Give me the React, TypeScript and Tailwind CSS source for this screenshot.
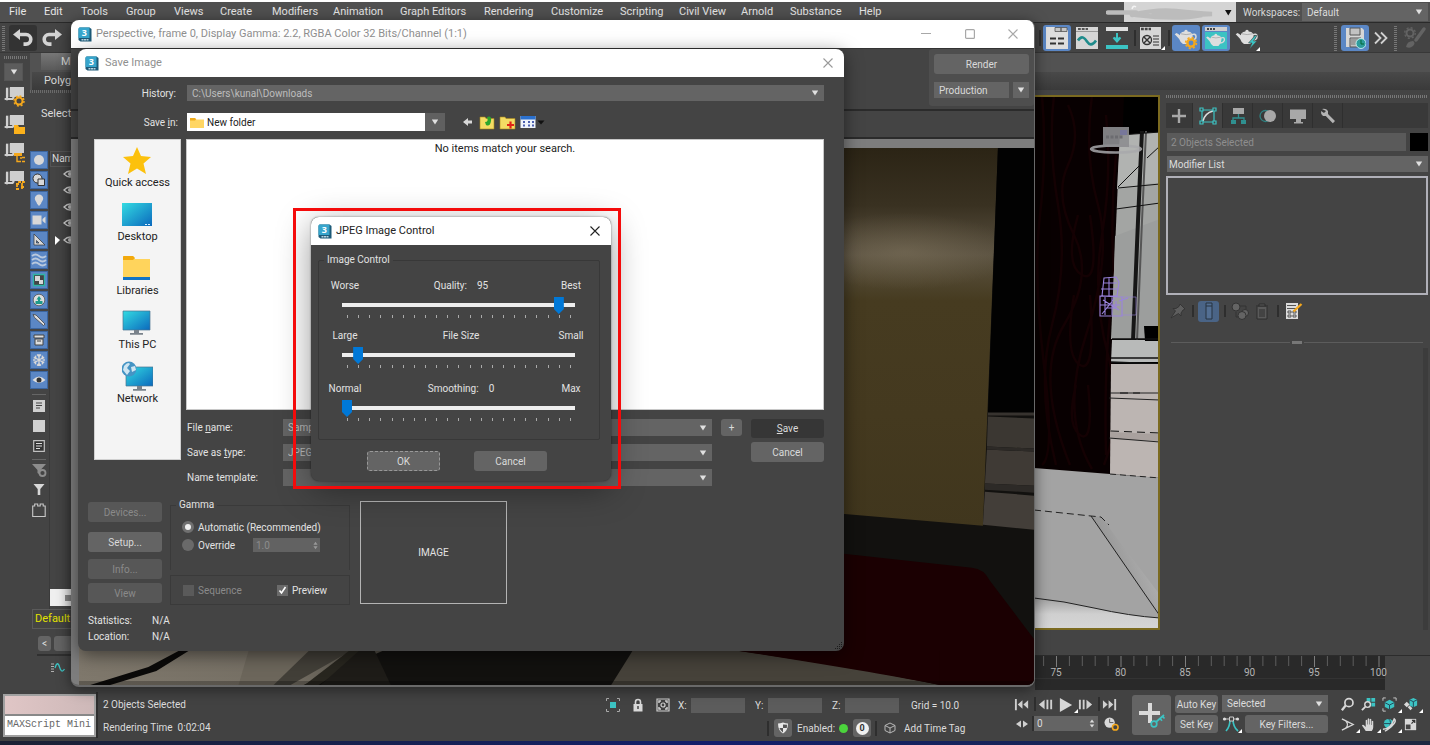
import React from "react";
import type { ReactNode } from "react";

const ink = "#cfcfcf";
const teal = "#3cc3c3";

/* ---------- shared controls ---------- */

function Caret({ className = "text-[#e0e0e0]" }: { className?: string }) {
  return (
    <svg viewBox="0 0 8 6" className={`h-[6px] w-[8px] ${className}`} fill="currentColor" aria-hidden="true">
      <path d="M0.8 0.5h6.4L4 5.6z" />
    </svg>
  );
}

function Combo({ label, value, className = "", text = "text-[#dcdcdc]", id }: { label?: string; value: string; className?: string; text?: string; id?: string }) {
  return (
    <div className={`grid items-center bg-[#646464] ${className}`}>
      <select id={id} aria-label={label} className={`h-full w-full appearance-none bg-transparent pr-5 pl-[5px] outline-none [grid-area:1/1] ${text}`}>
        <option>{value}</option>
      </select>
      <span className="pointer-events-none justify-self-end pr-[5px] [grid-area:1/1]">
        <Caret />
      </span>
    </div>
  );
}

function Btn({ children, className = "", label }: { children: ReactNode; className?: string; label?: string }) {
  return (
    <button type="button" aria-label={label} className={`flex items-center justify-center rounded-[3px] bg-[#646464] text-[#dadada] ${className}`}>
      {children}
    </button>
  );
}

function AppIcon() {
  return (
    <svg viewBox="0 0 14 15" className="h-[15px] w-[14px] shrink-0" aria-hidden="true">
      <path d="M1.5 0.5h10l2 1.5v12.5h-11l-2-1.5v-11z" fill="#1d5a78" />
      <path d="M1.5 0.5h10v10.5H0.5V1.5z" fill="#37a5cc" />
      <text x="6.4" y="8.6" textAnchor="middle" fontSize="9" fontWeight="700" fill="#fff" fontFamily="Open Sans, sans-serif">3</text>
      <path d="M3.5 12.7h7" stroke="#b9d3df" strokeWidth="1.4" strokeDasharray="2 .5" />
    </svg>
  );
}

function CloseX({ className }: { className: string }) {
  return (
    <button type="button" aria-label="Close" className={`flex h-[28px] w-[32px] items-center justify-center ${className}`}>
      <svg viewBox="0 0 10 10" className="h-[10px] w-[10px]" stroke="currentColor" strokeWidth="1.1" fill="none">
        <path d="M.5.5l9 9M9.5.5l-9 9" />
      </svg>
    </button>
  );
}

function Sep({ className = "h-[16px]" }: { className?: string }) {
  return <span className={`w-[2px] shrink-0 bg-[#2e2e2e] ${className}`} />;
}

function Grip({ className }: { className: string }) {
  return <span className={`shrink-0 bg-[repeating-linear-gradient(0deg,#777_0_1px,#444_1px_2px)] ${className}`} />;
}

/* ---------- menu and main toolbar ---------- */

const menus = [
  ["File", "w-[35px]"], ["Edit", "w-[37px]"], ["Tools", "w-[45px]"], ["Group", "w-[48px]"], ["Views", "w-[46px]"],
  ["Create", "w-[52px]"], ["Modifiers", "w-[61px]"], ["Animation", "w-[67px]"], ["Graph Editors", "w-[84px]"],
  ["Rendering", "w-[67px]"], ["Customize", "w-[69px]"], ["Scripting", "w-[59px]"], ["Civil View", "w-[62px]"],
  ["Arnold", "w-[49px]"], ["Substance", "w-[69px]"], ["Help", "w-[40px]"],
];

function MenuBar() {
  return (
    <header className="mt-[2px] flex h-[20px] shrink-0 items-center bg-[#505050] text-[11px] text-[#e6e6e6]">
      <nav className="flex pl-[9px]">
        {menus.map(([name, width]) => (
          <a key={name} href="#" className={`shrink-0 whitespace-nowrap ${width}`}>{name}</a>
        ))}
      </nav>
      <div className="ml-auto flex h-full items-center pr-[2px]">
        <svg viewBox="0 0 130 20" className="h-[20px] w-[130px]" role="img" aria-label="Account">
          <rect x="18" width="112" height="20" fill="#d4d4d4" />
          <path d="M2 10.5h28M26 13q24-6 44-4t36 3q-30 2-60 0 26-5 50 1-24 5-66 0" stroke="#bcbcbc" strokeWidth="4.5" fill="none" strokeLinecap="round" />
          <path d="M26 7q1-4 4-2" stroke="#f4f4f4" strokeWidth="1.5" fill="none" />
          <path d="M119 8h6.5l-3.2 5.5z" fill="#111" />
        </svg>
        <label htmlFor="workspace" className="w-[66px] pl-[7px] text-[10px] text-[#d6d6d6]">Workspaces:</label>
        <Combo id="workspace" value="Default" className="h-[18px] w-[126px] text-[10px]" />
      </div>
    </header>
  );
}

function Teapot({ gear, bolt, frame }: { gear?: boolean; bolt?: boolean; frame?: boolean }) {
  return (
    <svg viewBox="0 0 24 24" className="h-[24px] w-[24px]" aria-hidden="true">
      {frame && (
        <>
          <rect x="1" y="1" width="22" height="4" fill={ink} />
          <path d="M3 3h8" stroke="#444" strokeWidth="2" strokeDasharray="2 1" />
          <rect x="1" y="6" width="22" height="17" fill={teal} />
        </>
      )}
      <g transform={frame ? "translate(1.5 4.5) scale(.86)" : ""}>
        <path d="M17 9q5-2 5 1.500t-5 4" fill="none" stroke="#d9d9d9" strokeWidth="1.600" />
        <path d="M10.300 5.500q0-1.800 1.700-1.800t1.700 1.800q3 .4 4 1.700.9 1.200.9 3.300 0 4.500-3.600 7.500H9q-3-2-3.800-5Q3.500 11 .7 8.200L2.500 7q2 1 3.200 2.300.5-1.700 1.200-2.300 1-1.100 3.400-1.500z" fill="#dedede" />
        <path d="M7 7.800q5 1.600 10.500 0" fill="none" stroke="#999" strokeWidth=".7" />
      </g>
      {gear && <g><circle cx="17" cy="17" r="3.600" fill="#5b87c5" stroke="#f5a81c" strokeWidth="2.400" /><circle cx="17" cy="17" r="5.400" fill="none" stroke="#f5a81c" strokeWidth="1.600" strokeDasharray="2.120 2.120" /></g>}
      {bolt && <path d="M20 9.500l-6.500 7.500h3.500l-2.500 6 7.500-8h-3.500l3.500-5.500z" fill={teal} stroke="#444" strokeWidth=".6" />}
    </svg>
  );
}

function ToolButton({ on, label, children }: { on?: boolean; label: string; children: ReactNode }) {
  return (
    <button type="button" aria-label={label} className={`flex h-[26px] w-[28px] shrink-0 items-center justify-center rounded-[3px] ${on ? "bg-[#5b87c5]" : ""}`}>
      {children}
    </button>
  );
}

function MainToolbar() {
  return (
    <div className="flex h-[31px] shrink-0 items-center border-t border-[#2a2a2a] border-b border-b-[#383838] pt-[1px]">
      <Grip className="ml-[2px] h-[26px] w-[3px]" />
      <button type="button" aria-label="Undo" className="ml-[4px] flex h-[26px] w-[28px] items-center justify-center rounded-[3px] bg-[#333]">
        <svg viewBox="0 0 22 18" className="h-[18px] w-[22px]" fill="none"><path d="M6 5.500h8a4.800 4.800 0 010 9.600h-2.500" stroke="#d4d4d4" strokeWidth="3.600" /><path d="M8 0v11L1 5.500z" fill="#d4d4d4" /></svg>
      </button>
      <button type="button" aria-label="Redo" className="ml-[2px] flex h-[26px] w-[26px] items-center justify-center">
        <svg viewBox="0 0 22 18" className="h-[18px] w-[22px]" fill="none"><path d="M15 5.500H8a4.800 4.800 0 000 9.600h2.500" stroke="#d4d4d4" strokeWidth="3.600" /><path d="M14 0v11l7-5.500z" fill="#d4d4d4" /></svg>
      </button>
      <div className="ml-auto flex items-center">
        <Sep />
        <span className="w-[2px]" />
        <ToolButton on label="Layer explorer">
          <svg viewBox="0 0 22 22" className="h-[22px] w-[22px]"><path d="M0 0h9l2 3h11v19H0z" fill="#dedede" /><path d="M9 .5h6v4H9zM15 .5h6v4h-6z" fill="#c5c5c5" stroke="#555" strokeWidth=".8" /><path d="M4 11.500h6M12 11.500h6M4 16.500h6M12 16.500h6" stroke="#333" strokeWidth="2.200" /></svg>
        </ToolButton>
        <span className="w-[2px]" />
        <ToolButton label="Curve editor">
          <svg viewBox="0 0 22 22" className="h-[22px] w-[22px]"><path d="M0 0h22v22H0z" fill="#d6d6d6" /><path d="M2 2h10" stroke="#555" strokeWidth="2.200" strokeDasharray="2.800 1" /><path d="M0 4.500h22" stroke="#888" strokeWidth=".8" /><path d="M2 13.500c4-6 7-2 9 1s5 5 9-1" fill="none" stroke="#1f8b8b" strokeWidth="2.600" /></svg>
        </ToolButton>
        <span className="w-[2px]" />
        <ToolButton label="Ribbon">
          <svg viewBox="0 0 22 22" className="h-[22px] w-[22px]"><path d="M0 0h22v4H0z" fill="#dedede" /><path d="M0 18h22v4H0z" fill={teal} /><path d="M11 6v8M7.500 10.500L11 14.500l3.500-4" fill={teal} stroke={teal} strokeWidth="2" /></svg>
        </ToolButton>
        <span className="w-[3px]" />
        <Sep />
        <span className="w-[2px]" />
        <ToolButton label="Schematic view">
          <svg viewBox="0 0 26 24" className="h-[24px] w-[26px]"><path d="M1 1h21v22H1z" fill="#d6d6d6" /><path d="M2 3h10" stroke="#444" strokeWidth="2.400" strokeDasharray="2.800 1" /><circle cx="8" cy="14" r="4.500" fill="#d6d6d6" stroke="#333" strokeWidth="1.300" /><path d="M4.700 10.700l6.600 6.600M11.300 10.700l-6.600 6.600" stroke="#333" strokeWidth="1.400" /><path d="M14 10h6M14 13h6M14 16h6M14 19h6" stroke="#333" strokeWidth="1.200" /><path d="M26 20v4h-4z" fill="#fff" /></svg>
        </ToolButton>
        <span className="w-[2px]" />
        <Sep />
        <span className="w-[2px]" />
        <ToolButton on label="Render setup"><Teapot gear /></ToolButton>
        <span className="w-[2px]" />
        <ToolButton on label="Rendered frame window"><Teapot frame /></ToolButton>
        <span className="w-[3px]" />
        <ToolButton label="Render production"><Teapot bolt /></ToolButton>
        <svg viewBox="0 0 4 4" className="-ml-[5px] h-[4px] w-[4px] self-end" fill="#fff"><path d="M4 0v4H0z" /></svg>
        <span className="w-[74px]" />
        <Grip className="h-[26px] w-[3px]" />
        <span className="w-[4px]" />
        <ToolButton on label="Autosave">
          <svg viewBox="0 0 22 22" className="h-[22px] w-[22px]"><path d="M2 1h16l2 2v17H2z" fill="#d6d6d6" /><path d="M6 1h10v7H6zM6 11h11v9H6z" fill="#c2c2c2" stroke="#555" /><path d="M7 13h8M7 15h8M7 17h8" stroke="#777" /><circle cx="17" cy="16.500" r="5" fill="#2e9c9c" stroke="#d8ffff" strokeWidth=".8" /><path d="M17 13v4h3" stroke="#063" fill="none" /></svg>
        </ToolButton>
        <svg viewBox="0 0 14 14" className="ml-[5px] h-[14px] w-[14px]" fill="none" stroke="#d0d0d0" strokeWidth="1.800"><path d="M1 1.500L6.500 7 1 12.500M7 1.500L12.500 7 7 12.500" /></svg>
        <Grip className="ml-[6px] h-[26px] w-[3px]" />
        <svg viewBox="0 0 24 24" className="mr-[3px] ml-[6px] h-[24px] w-[24px]" fill="none"><circle cx="7" cy="7" r="3.500" stroke="#636363" strokeWidth="2" /><circle cx="7" cy="7" r="5.300" stroke="#636363" strokeWidth="1.300" strokeDasharray="2.080 2.080" /><path d="M21 3l-8 11" stroke="#636363" strokeWidth="3.500" strokeLinecap="round" /><path d="M3 21q1-6 7-6 3 2 0 5t-7 1z" fill="#636363" /></svg>
      </div>
    </div>
  );
}

/* ---------- left side ---------- */

const badges: ReactNode[] = [
  <g key="a"><circle cx="15" cy="15" r="3.500" fill="#444" stroke="#f5a81c" strokeWidth="2" /><circle cx="15" cy="15" r="5" fill="none" stroke="#f5a81c" strokeWidth="1.500" strokeDasharray="1.960 1.960" /></g>,
  <path key="b" d="M10 11h4l1 2h6v7H10z" fill="#fbb11b" />,
  <g key="c"><path d="M10 11h8v3h-8z" fill="#f5a81c" /><path d="M13 14v5.500h4M16 16h2M18 15.500h3M18 19.500h3" stroke="#f5a81c" strokeWidth="1.400" fill="none" /></g>,
  <path key="d" d="M12 14h3v-2h5v2M13 14v5M18 13v6M12 19h3M17 17h3" fill="none" stroke="#f5a81c" strokeWidth="1.800" strokeDasharray="3 1" />,
];

function LeftToolbar() {
  return (
    <aside className="flex w-[30px] shrink-0 flex-col pl-[4px]">
      <span className="mt-[3px] h-[3px] w-[24px] bg-[repeating-linear-gradient(90deg,#777_0_1px,#444_1px_2px)]" />
      <button type="button" aria-label="Toolbar options" className="mt-[4px] flex h-[18px] w-[19px] items-center justify-center border border-[#555] bg-[#5c5c5c]">
        <Caret className="text-[#e0e0e0]" />
      </button>
      <div className="mt-[5px] flex flex-col gap-[6px]">
        {badges.map((badge, i) => (
          <svg key={i} viewBox="0 0 22 22" className="h-[22px] w-[22px]">
            <path d="M6 1h14v10H6z" fill="#cfcfcf" />
            <path d="M3 2.500v11M1.500 13h6q2 0 2-2" stroke="#d0d0d0" strokeWidth="2.200" strokeLinecap="round" fill="none" />
            <path d="M5 1.500v9.500" stroke="#8a8a8a" strokeWidth="1" />
            {badge}
          </svg>
        ))}
      </div>
    </aside>
  );
}

const filterIcons: ReactNode[] = [
  <circle key="0" cx="8" cy="8" r="5" fill="#d8d8d8" />,
  <g key="1" fill="#d8d8d8" stroke="#333" strokeWidth="1"><circle cx="6.500" cy="6.500" r="4.500" /><path d="M7 7h6.500v6.500H7z" /></g>,
  <path key="2" d="M8 2.500a4.200 4.200 0 014.200 4.200c0 2-2 3-2.200 5L8 14l-2-2.300c-.2-2-2.200-3-2.200-5A4.200 4.200 0 018 2.500z" fill="#d8d8d8" />,
  <path key="3" d="M1.500 3.500h9v9h-9zM11.500 7l3-2.500v7l-3-2.500z" fill="#d8d8d8" />,
  <path key="4" d="M3 2v11h11zM5.500 8.500v2.500H8z" fill="#d8d8d8" fillRule="evenodd" stroke="#333" strokeWidth=".7" />,
  <path key="5" d="M1 4q3.500-3 7 0t7 0M1 8q3.500-3 7 0t7 0M1 12q3.500-3 7 0t7 0" fill="none" stroke="#b9c9dd" strokeWidth="1.700" />,
  <g key="6"><path d="M2.500 2.500h11v11h-11z" fill="#444" stroke="#2fb5a5" strokeWidth="1.300" /><path d="M4 4h5v5H4zM8 8h4v4H8z" fill="#d8d8d8" /></g>,
  <g key="7"><circle cx="8" cy="8" r="5.800" fill="#ddd" stroke="#555" strokeWidth=".8" /><path d="M8 4l2.500 3.500H9v1.500h2.500v3h-7V9H7V7.500H5.500z" fill="#1e9a8a" /></g>,
  <path key="8" d="M2 2.500l3 .5 9 9-1.500 1.500-9-8z" fill="#ddd" stroke="#444" strokeWidth=".8" />,
  <path key="9" d="M3 3h10v3H3zM4 7h8v6H4zM6 9h4" fill="#ddd" stroke="#444" strokeWidth="1" />,
  <g key="10" stroke="#d8d8d8" strokeWidth="1.300" fill="none"><path d="M8 2v12M2.800 5l10.400 6M13.200 5L2.800 11M6 2.500L8 4.500l2-2M6 13.500l2-2 2 2M2.300 7.500l2.700-1-.5-2.800M13.700 8.500l-2.700 1 .5 2.800M2.300 8.500l2.700 1-.5 2.800M13.700 7.500l-2.700-1 .5-2.800" /></g>,
  <g key="11"><path d="M1.500 8q6.500-7 13 0-6.500 6-13 0z" fill="#ddd" /><circle cx="8" cy="8" r="2.500" fill="#333" /></g>,
];

const plainIcons: ReactNode[] = [
  <g key="0"><path d="M2 2h12v12H2z" fill="#d0d0d0" /><path d="M5 5h6M5 7.500h6M5 10h4" stroke="#444" strokeWidth="1.100" /></g>,
  <path key="1" d="M2 2h12v12H2z" fill="#d0d0d0" />,
  <g key="2"><path d="M2.700 2.700h10.600v10.600H2.700z" fill="#333" stroke="#c0c0c0" strokeWidth="1.200" /><path d="M5 5.500h6M5 8h6M5 10.500h4" stroke="#ddd" strokeWidth="1.100" /></g>,
];

function SceneExplorer() {
  return (
    <div className="flex w-[130px] shrink-0 flex-col">
      <div className="h-[3px] bg-[repeating-linear-gradient(90deg,#6a6a6a_0_1px,#444_1px_2px)]" />
      <div className="mt-[14px] pl-[11px] text-[11px] leading-[14px] text-[#dcdcdc]">Select</div>
      <div className="mt-[30px] flex flex-1">
        <div className="flex w-[18px] flex-col items-center">
          <div className="flex flex-col gap-[2px]">
            {filterIcons.map((icon, i) => (
              <button key={i} type="button" aria-label={`Display filter ${i + 1}`} className="h-[18px] w-[18px] border border-[#3c66a0] bg-[#5b87c5]">
                <svg viewBox="0 0 16 16" className="h-[16px] w-[16px]">{icon}</svg>
              </button>
            ))}
          </div>
          <span className="mt-[5px] h-px w-[14px] bg-[#666]" />
          <div className="mt-[3px] flex flex-col gap-[4px]">
            {plainIcons.map((icon, i) => (
              <svg key={i} viewBox="0 0 16 16" className="h-[16px] w-[16px]">{icon}</svg>
            ))}
          </div>
          <span className="mt-[5px] h-px w-[14px] bg-[#666]" />
          <svg viewBox="0 0 16 60" className="mt-[2px] h-[60px] w-[16px]">
            <path d="M1 2h14L9.500 8v5L6.500 11V8z" fill="#8d8d8d" />
            <circle cx="11.500" cy="11" r="3" fill="#444" stroke="#8d8d8d" strokeWidth="1.800" />
            <path d="M2.500 22h11L9.300 27v6H6.700v-6z" fill="#d8d8d8" />
            <path d="M1.700 44h2v-2h3v2h2.500v-2h3v2h2v10.500H1.700z" fill="none" stroke="#c8c8c8" strokeWidth="1.100" />
          </svg>
        </div>
        <div className="ml-[1px] flex flex-1 flex-col border-l border-[#3a3a3a] text-[10px] text-[#dcdcdc]">
          <div className="h-[16px] border border-[#555] pl-[1px] leading-[13px]">Nam</div>
          <svg viewBox="0 0 30 84" className="h-[84px] w-[30px]">
            {[7, 23, 40, 56, 73].map((y) => (
              <g key={y}><path d={`M14 ${y}q6-6 12 0-6 6-12 0z`} fill="none" stroke="#d0d0d0" strokeWidth="1.300" /><circle cx="20" cy={y} r="2" fill="#d0d0d0" /></g>
            ))}
            <path d="M5 69l5 4-5 5z" fill="#fff" />
          </svg>
          <div className="mt-auto mb-[3px] flex h-[17px] items-center bg-[#efefef] pl-[15px]"><span className="h-[6px] w-[20px] bg-[#8c8c8c]" /></div>
        </div>
      </div>
      <div className="mb-[1px] ml-[2px] h-[20px] border border-[#5a5a5a] pl-[2px] text-[11px] leading-[17px] text-[#e2e200]">Default</div>
    </div>
  );
}

/* ---------- viewport and command panel ---------- */

function Viewport() {
  return (
    <div className="flex min-w-0 flex-1 justify-end overflow-hidden bg-black">
      <svg viewBox="0 0 126 535" className="h-[535px] w-[126px] shrink-0" role="img" aria-label="Perspective viewport">
        <rect width="126" height="535" fill="#000" />
        <path d="M0 0h90L77 380H0z" fill="#080001" />
        <g stroke="#160103" strokeWidth="2.500" fill="none" opacity=".85">
          <path d="M8 0q5 60-2 120t4 150-2 100M20 0q-6 50 4 110t-6 120 4 140M34 10q14 30 0 60t6 70-10 90 6 140M58 0q-8 60 6 110t-12 130 6 134M44 120q-14 50 4 60t8-60M40 200q-10 60 6 70t10-70M42 290q-10 40 4 50t8-50M72 20q6 60-4 120t6 120-4 110M82 60q-6 60-2 120M76 220q-6 60-4 140" />
        </g>
        <path d="M86 40l40-3-2 103-6 104H77z" fill="#a3a5a3" />
        <path d="M81 141L126 124v120H78z" fill="#9c9e9d" />
        <path d="M86 40h20l-3 52-20 2zM109 38h17v50l-18 1z" fill="#b1b3b1" />
        <path d="M108 36l-4 90-5 120" stroke="#161616" strokeWidth="4" fill="none" />
        <path d="M112 36l-4 90-5 120" stroke="#555" strokeWidth="2" fill="none" />
        <path d="M84 93l42-4M82 114l44-6M84 92l22-22M113 63l13-12M86 40l40-3" stroke="#111" fill="none" />
        <path d="M78 245h48v22H77z" fill="#b8bab9" />
        <path d="M110 231h16v15h-15z" fill="#000" />
        <path d="M78 244h48M77 263h49M77 267l49 2" stroke="#111" strokeWidth="1.500" />
        <path d="M77 269h49v114l-50-4z" fill="#bcb5b2" />
        <path d="M76 337l50 2v7l-50-2z" fill="#a9a19e" />
        <path d="M76 298h50M75 303l51 2M75 343l51 4" stroke="#222" />
        <path d="M77 336l49 2M86 298h20" stroke="#111" strokeDasharray="8 5" />
        <path d="M0 373l76 6 50 4v152H0z" fill="#a3a3a3" />
        <path d="M76 379l50 4" stroke="#222" strokeDasharray="6 4" fill="none" />
        <defs>
          <linearGradient id="vp-floor" x1="0" y1="0" x2="0" y2="1"><stop offset="0" stopColor="#a0a0a0" /><stop offset=".5" stopColor="#cfcfcf" /><stop offset="1" stopColor="#d6d6d6" /></linearGradient>
          <linearGradient id="vp-edge" x1="0" y1="0" x2="1" y2="-.6"><stop offset="0" stopColor="#969696" /><stop offset="1" stopColor="#d0d0d0" /></linearGradient>
        </defs>
        <path d="M57 421l10 1q6 5 9 12l50 66v21z" fill="url(#vp-edge)" />
        <path d="M0 503q30 3 60 10 36 8 66 10v12H0z" fill="url(#vp-floor)" />
        <path d="M0 503q30 3 60 10 36 8 66 10M57 421l69 100" stroke="#222" fill="none" />
        <path d="M0 415l57 6 10 1 8 8" stroke="#222" strokeDasharray="7 4" fill="none" />
        <g>
          <ellipse cx="82" cy="54" rx="25" ry="3.500" fill="none" stroke="#a8a8ac" strokeWidth="2.500" opacity=".85" />
          <path d="M69 32h26v20H69z" fill="#8d8d90" opacity=".9" />
          <path d="M72 42h18" stroke="#6c6c70" strokeWidth="3" strokeDasharray="3 1.500" />
          <path d="M86 35h7v5h-7z" fill="#77779a" />
        </g>
        <g fill="none" stroke="#9a83dd" strokeWidth="1.100">
          <path d="M70 183l12-1 3 5-2 14H68zM70 188h13M75 183v18M67 194h17M66 201l22 1v19H66zM66 210h20M71 202v18M78 202v18M69 205l16 10M85 206l9-3M72 213h10v-7M68 219l12-15" />
          <path d="M88 202h14v18H88" strokeWidth=".6" />
        </g>
        <path d="M0 1h125v533H0" stroke="#7b6a20" strokeWidth="2" fill="none" />
      </svg>
    </div>
  );
}

const panelTabs: { name: string; on?: boolean; icon: ReactNode }[] = [
  { name: "Create", icon: <path d="M10 3v14M3 10h14" stroke="#a8a8a8" strokeWidth="2.400" /> },
  { name: "Modify", on: true, icon: <g fill="none"><path d="M4 4h12v12H4z" stroke={teal} strokeWidth="1.200" /><path d="M5 15q2-8 10-10" stroke="#ddd" strokeWidth="1.600" /><path d="M2 2h3v3H2zM15 2h3v3h-3zM2 15h3v3H2zM15 15h3v3h-3z" fill="#444" stroke={teal} strokeWidth="1.200" /></g> },
  { name: "Hierarchy", icon: <g><path d="M5 2h11v6H5z" fill="#a8a8a8" /><path d="M10.500 8v4M5 15v-3h11v3" stroke="#2f9090" strokeWidth="1.300" fill="none" /><path d="M3 14h5v4H3zM13 14h5v4h-5z" fill="#2f9090" /></g> },
  { name: "Motion", icon: <g><circle cx="7.500" cy="10" r="5.500" fill="none" stroke="#2f8080" strokeWidth="1.300" /><circle cx="12" cy="10" r="6" fill="#a8a8a8" /></g> },
  { name: "Display", icon: <path d="M2 3.500h16v9.500h-5v3h2v1.500H6V16h2v-3H2z" fill="#a8a8a8" /> },
  { name: "Utilities", icon: <path d="M4 3q4-1 6 2v3l7 7-2.200 2.200-7-7.200H5Q2.500 8 3 5l3 2 2-2z" fill="#b4b4b4" /> },
];

function CommandPanel() {
  return (
    <aside className="flex w-[270px] shrink-0 flex-col pt-[5px] pr-[2px] pl-[6px] text-[10px]">
      <div className="h-[3px] bg-[repeating-linear-gradient(90deg,#777_0_1px,#444_1px_2px)]" />
      <div className="mt-[5px] flex h-[25px] bg-[#393939]">
        {panelTabs.map((tab) => (
          <button key={tab.name} type="button" aria-label={tab.name} className="flex w-[30px] items-center justify-center border-r border-[#2f2f2f] first:w-[27px] aria-[label=Modify]:bg-[#444]">
            <svg viewBox="0 0 20 20" className="h-[20px] w-[20px]">{tab.icon}</svg>
          </button>
        ))}
      </div>
      <div className="mt-[5px] flex h-[18px] gap-[4px] pl-[1px]">
        <input aria-label="Object name" readOnly value="2 Objects Selected" className="min-w-0 flex-1 bg-[#5a5a5a] pl-[4px] text-[#8e8e8e] outline-none" />
        <span className="w-[18px] bg-black" />
      </div>
      <Combo label="Modifier List" value="Modifier List" className="mt-[5px] ml-[1px] h-[16px] [&>select]:pl-[2px]" />
      <div className="mt-[4px] h-[119px] border-2 border-[#b0b0b8]" />
      <div className="mt-[5px] flex h-[22px] items-center pl-[4px]">
        <svg viewBox="0 0 16 16" className="h-[16px] w-[16px]" fill="#5e5e5e" stroke="#303030" strokeWidth=".8"><path d="M10 1l5 5-2 1-2 3v3L8.500 10.500 1 15l4.500-7L3 5.500h3l3-2z" /></svg>
        <Sep className="ml-[6px] h-[12px]" />
        <button type="button" aria-label="Show end result" className="ml-[4px] flex h-[21px] w-[21px] items-center justify-center rounded-[3px] bg-[#4a6486]">
          <svg viewBox="0 0 10 18" className="h-[18px] w-[10px]" fill="#536f93" stroke="#26323f"><path d="M2 1h6v16H2zM2 4h6" /></svg>
        </button>
        <Sep className="ml-[5px] h-[12px]" />
        <svg viewBox="0 0 20 20" className="ml-[4px] h-[20px] w-[20px]" fill="#646464" stroke="#333"><path d="M10 5h6v5M6 11v5h4" fill="none" /><circle cx="6" cy="6" r="4" /><circle cx="15" cy="12" r="3.500" /><circle cx="12" cy="14.500" r="4" /></svg>
        <svg viewBox="0 0 16 18" className="ml-[4px] h-[18px] w-[16px]" fill="#5a5a5a" stroke="#2c2c2c"><path d="M2 4h12M5 4V2h6v2M3 5v12h10V5M6 7v8M8 7v8M10 7v8" /></svg>
        <Sep className="ml-[7px] h-[12px]" />
        <svg viewBox="0 0 18 18" className="ml-[6px] h-[18px] w-[18px]"><path d="M1 1h12v16H1z" fill="#dcdcdc" /><path d="M2 3.500h9M2 6.500h9" stroke="#555" /><path d="M3 9h3v2H3zM8 9h3v2H8zM3 13h3v2H3zM8 13h3v2H8z" fill="#ddd" stroke="#555" /><path d="M8.500 9.500L16.500 2" stroke="#f5a81c" strokeWidth="2.200" /></svg>
      </div>
      <div className="mt-[18px] flex h-[4px] items-center gap-[2px] px-[5px]">
        <span className="h-px flex-1 bg-[#5c5c5c]" />
        <span className="h-[3px] w-[10px] bg-[#777]" />
        <span className="h-px flex-1 bg-[#5c5c5c]" />
      </div>
      <div className="mt-[4px] w-[5px] flex-1 self-end bg-[#3c3c3c]" />
    </aside>
  );
}

/* ---------- timeline and status ---------- */

const frames = [75, 80, 85, 90, 95, 100];

function Timeline() {
  return (
    <div className="flex h-[60px] shrink-0">
      <div className="ml-[31px] flex w-[60px] flex-col pt-[6px]">
        <div className="flex gap-[3px] pl-[7px]">
          <Btn className="h-[15px] w-[13px] text-[10px]">&lt;</Btn>
          <Btn label="Time slider" className="h-[15px] w-[36px]">{null}</Btn>
        </div>
        <span className="mt-[3px] ml-[6px] h-[2px] bg-[#303030]" />
        <svg viewBox="0 0 16 12" className="mt-[6px] ml-[19px] h-[12px] w-[16px]" fill="none"><path d="M1 2h3M1 4.500h3M1 7h3M1 9.500h3" stroke="#b0b0b0" /><path d="M5 6q2.500-8 4.500-1t5 2" stroke={teal} strokeWidth="1.300" /></svg>
      </div>
      <div className="mt-[25px] flex flex-1 justify-end border-t border-[#2c2c2c]">
        <div className="flex h-[34px] w-[350px] bg-[#292929]">
          <svg viewBox="0 0 350 34" className="h-[34px] w-[350px] overflow-visible" aria-label="Timeline">
            {Array.from({ length: 28 }, (_, i) => (
              <path key={i} d={`M${344 - i * 12.9} 0v${i % 5 === 0 ? 11 : 10}`} stroke={i % 5 === 0 ? "#7e7e7e" : "#5e5e5e"} />
            ))}
            <path d="M0 22.500h350" stroke="#333" />
            {frames.map((f, i) => (
              <text key={f} x={21 + i * 64.500} y="20" textAnchor="middle" fontSize="10" fill="#b4b4b4" fontFamily="Roboto, sans-serif">{f}</text>
            ))}
          </svg>
        </div>
        <div className="w-[45px]" />
      </div>
    </div>
  );
}

function Coord({ axis }: { axis: string }) {
  return (
    <label className="flex items-center gap-[4px]">
      <span className="w-[9px]">{axis}:</span>
      <input className="h-[15px] w-[54px] bg-[#5c5c5c] outline-none" />
    </label>
  );
}

const glyph: Record<string, ReactNode> = {
  start: <g fill="#d0d0d0"><path d="M1 2h2v12H1zM9 3.500v9L4 8zM15 3.500v9L10 8z" /></g>,
  prev: <path d="M1 8l6-5v10zM9 3h2v10H9zM13 3h2v10h-2z" fill="#d0d0d0" />,
  play: <path d="M2 1l13 7.500L2 16z" fill="#d6d6d6" />,
  next: <path d="M15 8L9 3v10zM1 3h2v10H1zM5 3h2v10H5z" fill="#d0d0d0" />,
  end: <g fill="#d0d0d0"><path d="M13 2h2v12h-2zM1 3.500v9L6 8zM7 3.500v9L12 8z" /></g>,
  zoom: <g fill="none" stroke="#d8d8d8"><circle cx="9.500" cy="6" r="4.300" strokeWidth="1.800" /><path d="M6 9l-4 5" strokeWidth="2.400" /></g>,
  zoomAll: <g fill="none"><path d="M6 1h4v4H6zM11 1h4v4h-4zM11 6h4v4h-4z" fill={teal} /><circle cx="7" cy="8" r="3" stroke="#d8d8d8" strokeWidth="1.500" /><path d="M4.500 10.500L1 14" stroke="#d8d8d8" strokeWidth="2" /></g>,
  extents: <g><path d="M8 3l5 2.500v5L8 13l-5-2.500v-5z" fill={teal} /><path d="M3 6l5 2.500L13 6M8 8.500V13" stroke="#245" fill="none" /><path d="M1 4V1h3M12 1h3v3M1 12v3h3" stroke="#ccc" fill="none" /></g>,
  extentsAll: <g><path d="M11 1l4 2v6l-4 2-4-2V3z" fill={teal} /><path d="M11 5v6M7 3l4 2 4-2" stroke="#245" fill="none" /><path d="M4 5l3 3-3 3-3-3zM7 9l3 3-2 2-3-3z" fill="#d8d8d8" /></g>,
  fov: <path d="M2 2l12 6L2 14M6 4q4 4 0 8" fill="none" stroke="#d8d8d8" strokeWidth="1.400" />,
  pan: <path d="M5 15q-1-2-4-6 1-1.500 2.500 0L5 10.500V3.500q.8-1.200 1.600 0V8h.5V2q.8-1.200 1.700 0v6h.5V2.500q.8-1.200 1.600 0V8.500h.5V4.500q.8-1.200 1.600 0V11q0 2.500-1.500 4z" fill="#d8d8d8" />,
  orbit: <g><circle cx="7" cy="7" r="5" fill={teal} /><path d="M7 2q4 3 0 10M2 7h10" stroke="#245" fill="none" /><path d="M1 13q8 0 12-11 3 2-2 7t-8 6" stroke="#d8d8d8" strokeWidth="1.600" fill="none" /></g>,
  maximize: <g><path d="M2 2h12v12H2z" fill="#d8d8d8" /><path d="M9.500 3.500h3v3M12.500 3.500L9 7" stroke="#333" fill="none" strokeWidth="1.300" /><path d="M3 8h5v5H3z" fill="#444" /></g>,
};

function Glyph({ name, corner }: { name: string; corner?: boolean }) {
  return (
    <button type="button" aria-label={name} className="flex h-[18px] w-[20px] items-end">
      <svg viewBox="0 0 17 17" className="h-[16px] w-[16px]">{glyph[name]}</svg>
      {corner && <svg viewBox="0 0 4 4" className="h-[4px] w-[4px]" fill="#fff"><path d="M4 0v4H0z" /></svg>}
    </button>
  );
}

function StatusBar() {
  return (
    <footer className="flex h-[51px] shrink-0 bg-[#424242] text-[10px] text-[#dcdcdc]">
      <div className="mt-[4px] ml-[3px] flex h-[43px] w-[93px] flex-col border-2 border-[#a0a0a0] font-['Liberation_Mono']">
        <div className="h-[20px] border-b-2 border-[#888] bg-gradient-to-r from-[#e0c6c6] to-[#cdb8b8]" />
        <div className="flex-1 bg-white pl-[2px] text-[10px] leading-[17px] whitespace-nowrap text-[#666]">MAXScript Mini</div>
      </div>
      <Sep className="mt-[2px] h-[46px]" />
      <div className="ml-[5px] flex flex-col gap-[7px] pt-[7px]">
        <span className="h-[16px] leading-[16px]">2 Objects Selected</span>
        <span className="h-[16px] leading-[16px] whitespace-pre">Rendering Time  0:02:04</span>
      </div>
      <div className="ml-auto flex w-[401px] flex-col pt-[7px]">
        <div className="flex h-[16px] items-center">
          <svg viewBox="0 0 16 16" className="h-[16px] w-[16px]"><path d="M5 5h6v6H5z" fill={teal} /><path d="M1.500 4V1.500H4M12 1.500h2.500V4M1.500 12v2.500H4M14.500 12v2.500H12" fill="none" stroke="#aaa" /></svg>
          <svg viewBox="0 0 12 14" className="ml-[11px] h-[14px] w-[12px]"><path d="M3.500 6V4a2.500 2.500 0 015 0v2" fill="none" stroke="#d8d8d8" strokeWidth="1.600" /><path d="M1.500 6h9v7.500h-9z" fill="#d8d8d8" /><path d="M6 8v3" stroke="#444" strokeWidth="1.500" /></svg>
          <svg viewBox="0 0 14 14" className="ml-[12px] h-[14px] w-[14px]" fill="none" stroke="#d0d0d0" strokeWidth="1.200"><path d="M1 1h12v12H1z" /><path d="M3 5V3h2M9 3h2v2M3 9v2h2M11 9v2H9" strokeWidth="1.500" /><circle cx="7" cy="7" r="2" /></svg>
          <span className="w-[8px]" />
          <div className="flex gap-[10px]">
            <Coord axis="X" /><Coord axis="Y" /><Coord axis="Z" />
          </div>
          <span className="ml-[12px] whitespace-nowrap">Grid = 10.0</span>
        </div>
        <div className="mt-[5px] flex h-[20px] items-center pl-[162px]">
          <Sep className="h-[15px]" />
          <Btn label="Security" className="ml-[5px] h-[18px] w-[18px]">
            <svg viewBox="0 0 12 12" className="h-[12px] w-[12px]"><path d="M6 .5q3 1 5 1 0 7-5 10-5-3-5-10 2 0 5-1z" fill="#e8e8e8" /><path d="M6 2.500v3.500h3.800Q10 4 10 2.800zM6 6v4.500Q3 8 2.400 6z" fill="#555" /></svg>
          </Btn>
          <span className="ml-[5px] w-[38px]">Enabled:</span>
          <span className="ml-[4px] h-[9px] w-[9px] rounded-full bg-[#4bd33c]" />
          <Btn className="ml-[5px] h-[18px] w-[18px]"><span className="flex h-[13px] w-[13px] items-center justify-center rounded-full bg-[#f0f0f0] text-[9px] leading-none font-bold text-[#333]">0</span></Btn>
          <Sep className="ml-[4px] h-[15px]" />
          <svg viewBox="0 0 12 12" className="ml-[7px] h-[12px] w-[12px]" fill="none" stroke="#b8b8b8"><path d="M6 1l5 2.500v5L6 11 1 8.500v-5zM1 3.500L6 6l5-2.500M6 6v5" /></svg>
          <span className="ml-[8px] whitespace-nowrap">Add Time Tag</span>
        </div>
      </div>
      <div className="ml-[8px] flex w-[118px] flex-col gap-[2px] pt-[5px]">
        <div className="flex h-[18px] items-center">
          <Glyph name="start" /><Sep className="mr-[2px] h-[14px]" /><Glyph name="prev" /><Glyph name="play" corner /><Glyph name="next" /><Sep className="mr-[2px] h-[14px]" /><Glyph name="end" />
        </div>
        <div className="flex h-[17px] items-center">
          <svg viewBox="0 0 12 10" className="ml-[2px] h-[10px] w-[12px]" fill="#d0d0d0"><path d="M0 5l5-3.500v7zM12 5L7 1.500v7z" /></svg>
          <Sep className="ml-[4px] h-[15px]" />
          <label className="grid h-[15px] w-[64px] items-center bg-[#646464]">
            <input aria-label="Current frame" defaultValue="0" className="w-full bg-transparent pl-[3px] outline-none [grid-area:1/1]" />
            <svg viewBox="0 0 6 10" className="pointer-events-none mr-[3px] h-[9px] w-[6px] justify-self-end [grid-area:1/1]" fill="#ddd"><path d="M.5 4L3 .5 5.500 4zM.5 6L3 9.500 5.500 6z" /></svg>
          </label>
          <svg viewBox="0 0 16 16" className="ml-[6px] h-[15px] w-[15px]"><circle cx="6" cy="7" r="5.500" fill="#d8d8d8" /><path d="M6 3v4h4" stroke="#555" fill="none" /><circle cx="12" cy="12" r="3" fill="#444" stroke="#f5a81c" strokeWidth="1.700" /></svg>
        </div>
      </div>
      <Btn label="Set keys" className="mt-[5px] h-[40px] w-[39px]">
        <svg viewBox="0 0 28 28" className="h-[28px] w-[28px]"><path d="M12 2v20M1 12h21" stroke="#dadada" strokeWidth="4" /><circle cx="16" cy="23" r="2.800" stroke={teal} strokeWidth="1.700" fill="#646464" /><path d="M18 21l8-7M22 17.500l2 2.200M24.500 15.300l2 2.200" stroke={teal} strokeWidth="1.700" fill="none" /></svg>
      </Btn>
      <div className="ml-[4px] flex w-[43px] flex-col gap-[2px] pt-[5px]">
        <Btn className="h-[18px] whitespace-nowrap">Auto Key</Btn>
        <Btn className="h-[18px] whitespace-nowrap">Set Key</Btn>
      </div>
      <div className="ml-[4px] flex w-[106px] flex-col gap-[3px] pt-[5px]">
        <Combo label="Key selection" value="Selected" className="h-[17px]" />
        <div className="flex items-center gap-[3px]">
          <svg viewBox="0 0 20 18" className="h-[18px] w-[20px]" fill="none"><path d="M4 16q4-4 4-12h3q0 8 5 12" stroke={teal} strokeWidth="1.700" /><path d="M2 4h14" stroke="#ccc" /><circle cx="2.500" cy="4" r="1.600" fill="#ddd" /><circle cx="15.500" cy="4" r="1.600" fill="#ddd" /><path d="M7.500 2h4v4h-4z" fill="#444" stroke="#ccc" /><path d="M20 14v4h-4z" fill="#fff" /></svg>
          <Btn className="h-[18px] flex-1">Key Filters...</Btn>
        </div>
      </div>
      <div className="mr-[6px] ml-[12px] grid grid-cols-[repeat(4,21px)] content-start gap-y-[2px] pt-[5px]">
        <Glyph name="zoom" /><Glyph name="zoomAll" /><Glyph name="extents" corner /><Glyph name="extentsAll" corner />
        <Glyph name="fov" corner /><Glyph name="pan" corner /><Glyph name="orbit" corner /><Glyph name="maximize" />
      </div>
    </footer>
  );
}

/* ---------- rendered frame window ---------- */

function RenderedScene() {
  return (
    <svg viewBox="79 149 955 536" preserveAspectRatio="xMaxYMin slice" className="min-h-0 w-full flex-1" role="img" aria-label="Rendered frame">
      <defs>
        <linearGradient id="wall" x1="0" y1="149" x2="0" y2="530" gradientUnits="userSpaceOnUse">
          <stop offset="0" stopColor="#2b2415" /><stop offset=".15" stopColor="#393121" /><stop offset=".28" stopColor="#5b5241" /><stop offset=".4" stopColor="#463b20" /><stop offset=".7" stopColor="#44391f" /><stop offset="1" stopColor="#40361d" />
        </linearGradient>
        <linearGradient id="floor" x1="79" y1="0" x2="460" y2="0" gradientUnits="userSpaceOnUse">
          <stop offset="0" stopColor="#7f786c" /><stop offset=".55" stopColor="#756f64" /><stop offset="1" stopColor="#34322d" />
        </linearGradient>
        <radialGradient id="glow" cx="905" cy="252" r="110" gradientTransform="matrix(1 0 0 .35 0 164)" gradientUnits="userSpaceOnUse">
          <stop offset="0" stopColor="#8a7e66" stopOpacity=".4" /><stop offset="1" stopColor="#8a7e66" stopOpacity="0" />
        </radialGradient>
      </defs>
      <rect x="79" y="149" width="955" height="536" fill="#12110f" />
      <path d="M700 149h298l-15 377-283-24z" fill="url(#wall)" />
      <path d="M700 149h298l-8 200H700z" fill="url(#glow)" />
      <path d="M998 149h36v266h-46z" fill="#020202" />
      <path d="M988 413h46v3h-46z" fill="#37332f" />
      <path d="M988 417l46 2v30l-47-2z" fill="#3b3732" /><path d="M987 450l47 2v34l-49-2z" fill="#3f3a35" /><path d="M985 492l49 4v34l-51-5z" fill="#433e39" />
      <path d="M987 447l47 2v3l-47-2zM985 484l49 2v7l-49-3z" fill="#2d2a27" />
      <path d="M700 545l144 9 128 14q12 1 18 13l44 58v46H700z" fill="#1b0002" />
      <path d="M640 640l100 11 120 18 80 16H612z" fill="#46423a" />
      <path d="M740 651h200v34q-60-12-200-34z" fill="#1b0002" />
      <path d="M79 640h330l-104 45H79z" fill="url(#floor)" />
      <path d="M250 651h75l-50 34H240z" fill="#6c665b" />
      <path d="M310 651h42l-60 34h-17z" fill="#423f38" />
      <path d="M350 651h22l-52 34h-14z" fill="#28261f" />
      <path d="M360 651h16l16 34h-70z" fill="#1e1c18" />
      <path d="M180 651l-30 16-58 18h20l46-14 32-20z" fill="#0b0a09" />
      <path d="M79 681h955v4H79z" fill="#000" opacity=".25" />
    </svg>
  );
}

function FrameWindow() {
  return (
    <section className="absolute top-[20px] right-[395px] left-[71px] flex h-[667px] flex-col overflow-hidden rounded-[8px] border-r border-b-2 border-[#696969] bg-[#444] text-[10px] shadow-[0_2px_14px_rgba(0,0,0,0.5)]">
      <div className="flex h-[28px] shrink-0 items-center bg-white pl-[7px]">
        <AppIcon />
        <h2 className="ml-[4px] text-[11px] whitespace-nowrap text-[#8f8f8f]">Perspective, frame 0, Display Gamma: 2.2, RGBA Color 32 Bits/Channel (1:1)</h2>
        <div className="ml-auto flex items-center gap-[28px] pr-[5px] text-[#a8a8a8]">
          <button type="button" aria-label="Minimize"><svg viewBox="0 0 10 10" className="h-[10px] w-[10px]" stroke="currentColor"><path d="M0 4.500h10" /></svg></button>
          <button type="button" aria-label="Maximize" className="ml-[6px]"><svg viewBox="0 0 10 10" className="h-[10px] w-[10px]" fill="none" stroke="currentColor" strokeWidth="1.200"><rect x=".6" y=".6" width="8.800" height="8.800" rx="1" /></svg></button>
          <CloseX className="-ml-[6px] text-[#a8a8a8]" />
        </div>
      </div>
      <div className="flex h-[63px] shrink-0 justify-end border-t border-b-2 border-[#333] border-b-[#2b2b2b]">
        <div className="h-[57px] w-[105px] rounded-[3px] bg-[#4e4e4e] px-[5px] pt-[5px]">
          <Btn className="h-[20px] w-full">Render</Btn>
          <div className="mt-[8px] flex gap-[4px]">
            <select aria-label="Render mode" className="h-[16px] min-w-0 flex-1 appearance-none bg-[#646464] pl-[5px] text-[#dadada]"><option>Production</option></select>
            <button type="button" aria-label="Choose mode" className="flex w-[16px] items-center justify-center bg-[#646464]"><Caret /></button>
          </div>
        </div>
      </div>
      <div className="h-[28px] shrink-0 border-b-2 border-[#2b2b2b]" />
      <div className="flex min-h-0 flex-1 flex-col border-t-[9px] border-l-[8px] border-[#7d7d7d]">
        <RenderedScene />
      </div>
    </section>
  );
}

/* ---------- save dialog ---------- */

function Monitor() {
  return (
    <g>
      <path d="M1 2h27v19H1z" fill="url(#screen)" stroke="#4c7391" strokeWidth=".7" />
      <path d="M12 21h5v3h-5zM8 24h13v1.800H8z" fill="#79828b" />
    </g>
  );
}

const places: { name: string; icon: ReactNode }[] = [
  { name: "Quick access", icon: <path d="M15 0l4 9 10 1-7.500 6.500L24 27l-9-5.500L6 27l2.500-10.500L1 10l10-1z" fill="#fcc10d" /> },
  { name: "Desktop", icon: <g><path d="M0 2h30v23H0z" fill="url(#screen)" /><path d="M23 23.500h5" stroke="#d8efff" strokeDasharray="2 1" /></g> },
  { name: "Libraries", icon: <g><path d="M1 2q0-1 1-1h9l2 3h15v20H1z" fill="#ffd45c" /><path d="M1 2q0-1 1-1h9l2 2-2 2H1z" fill="#f2a90c" /><path d="M1 22h27v3H1z" fill="#1273c4" /></g> },
  { name: "This PC", icon: <Monitor /> },
  { name: "Network", icon: <g><g transform="translate(3 2)"><Monitor /></g><circle cx="7" cy="6" r="7.500" fill="#4594c4" /><path d="M2 3q4-5 6-2l-3 4 3 3-3 4-4-5zM9 4l4-1 1 4-4 2z" fill="#cfe6f2" /></g> },
];

function Places() {
  return (
    <nav className="flex h-[321px] w-[87px] shrink-0 flex-col gap-[6px] border border-[#d0d0d0] bg-[#f4f4f4] pt-[5px] text-[11px] text-[#222]">
      {places.map((p) => (
        <a key={p.name} href="#" className="flex h-[48px] flex-col items-center">
          <svg viewBox="0 -2 31 30" className="h-[30px] w-[31px]">
            <defs><linearGradient id="screen" x1="0" y1="0" x2="1" y2="1"><stop offset="0" stopColor="#33dbe2" /><stop offset="1" stopColor="#0b69bd" /></linearGradient></defs>
            {p.icon}
          </svg>
          <span className="leading-[16px] whitespace-nowrap">{p.name}</span>
        </a>
      ))}
    </nav>
  );
}

function FieldRow({ id, label, value }: { id: string; label: ReactNode; value: string }) {
  return (
    <div className="flex items-center">
      <label htmlFor={id} className="w-[96px] shrink-0">{label}</label>
      <Combo id={id} value={value} text="text-[#bdbdbd]" className="h-[17px] flex-1" />
    </div>
  );
}

function SaveDialog() {
  return (
    <section className="absolute top-[49px] left-[78px] flex h-[602px] w-[766px] flex-col overflow-hidden rounded-[8px] bg-[#444] text-[10px] text-[#e2e2e2] shadow-[0_4px_18px_rgba(0,0,0,0.5)]">
      <div className="flex h-[28px] shrink-0 items-center justify-between bg-white pl-[7px]">
        <div className="flex items-center gap-[6px]">
          <AppIcon />
          <h2 className="text-[11px] text-[#8f8f8f]">Save Image</h2>
        </div>
        <CloseX className="text-[#9a9a9a]" />
      </div>
      <div className="flex flex-1 flex-col pt-[8px] pr-[20px] pl-[10px]">
        <div className="flex h-[16px] items-center">
          <label htmlFor="history" className="w-[99px] pr-[11px] text-right">History:</label>
          <Combo id="history" value="C:\Users\kunal\Downloads" text="text-[#bdbdbd]" className="h-[16px] flex-1" />
        </div>
        <div className="mt-[12px] flex h-[18px] items-center">
          <label htmlFor="savein" className="w-[99px] pr-[9px] text-right">Save <u>i</u>n:</label>
          <div className="flex h-[18px] w-[238px] items-center gap-[3px] bg-white pl-[3px]">
            <svg viewBox="0 0 14 11" className="h-[11px] w-[14px]"><path d="M0 1h5l1.500 1.500H14V11H0z" fill="#ffd663" /><path d="M0 1h5l1 1.500-1 1H0z" fill="#efab1c" /></svg>
            <select id="savein" className="flex-1 appearance-none text-[#222] outline-none"><option>New folder</option></select>
          </div>
          <button type="button" aria-label="Open folder list" className="flex h-[18px] w-[20px] items-center justify-center bg-[#606060]"><Caret /></button>
          <svg viewBox="0 0 84 18" className="ml-[16px] h-[18px] w-[84px]" role="img" aria-label="Folder tools">
            <path d="M2 9l5-4v2.500h4v3H7V13z" fill="#d8d8d8" />
            <path d="M19 4h5l1 1.500h8V16H19z" fill="#f4dc63" stroke="#a8861c" strokeWidth=".6" /><path d="M26 4q5-2 4 4t-5 4l-1-3q4 0 2-5z" fill="#2ca52c" />
            <path d="M39 4h5l1 1.500h9V16H39z" fill="#f4dc63" stroke="#a8861c" strokeWidth=".6" /><path d="M49.500 8.500v7M46 12h7" stroke="#e02418" strokeWidth="2.200" />
            <path d="M59.500 3h15v12h-15z" fill="#eef3fb" /><path d="M59.500 3h15v3.500h-15z" fill="#2b71cf" /><path d="M62 9h2M67 9h2M71 9h2M62 12.500h2M67 12.500h2M71 12.500h2" stroke="#4a5fb0" strokeWidth="1.800" />
            <path d="M76.500 7.500h7L80 11.500z" fill="#111" />
          </svg>
        </div>
        <div className="mt-[8px] flex pl-[6px]">
          <Places />
          <div className="ml-[5px] flex min-w-0 flex-1 flex-col">
            <div className="h-[271px] border border-[#c8c8c8] bg-white pt-[1px] text-center text-[11px] leading-[15px] text-[#222]">No items match your search.</div>
            <div className="mt-[9px] flex gap-[9px] pl-[1px]">
              <div className="flex flex-1 flex-col gap-[8px]">
                <FieldRow id="filename" label={<>File <u>n</u>ame:</>} value="Samp" />
                <FieldRow id="savetype" label={<>Save as <u>t</u>ype:</>} value="JPEG" />
                <FieldRow id="template" label="Name template:" value="" />
              </div>
              <Btn className="h-[17px] w-[21px]">+</Btn>
              <div className="flex w-[73px] flex-col gap-[4px]">
                <Btn className="h-[19px] bg-[#363636]!"><span><u>S</u>ave</span></Btn>
                <Btn className="h-[20px]">Cancel</Btn>
              </div>
            </div>
          </div>
        </div>
        <div className="mt-[15px] flex">
          <div className="flex w-[74px] flex-col pt-px">
            <Btn className="h-[20px] bg-[#575757]! text-[#8a8a8a]!">Devices...</Btn>
            <Btn className="mt-[10px] h-[20px]">Setup...</Btn>
            <Btn className="mt-[7px] h-[20px] bg-[#575757]! text-[#8a8a8a]!">Info...</Btn>
            <Btn className="mt-[4px] h-[20px] bg-[#575757]! text-[#8a8a8a]!">View</Btn>
          </div>
          <div className="ml-[8px] w-[180px]">
            <fieldset className="h-[69px] border border-b-0 border-[#3a3a3a] px-[11px]">
              <legend className="-ml-[6px] px-[3px] leading-[8px]">Gamma</legend>
              <label className="mt-[9px] flex h-[18px] items-center gap-[4px] whitespace-nowrap">
                <input type="radio" name="gamma" defaultChecked className="h-[12px] w-[12px] appearance-none rounded-full border-[3px] border-[#707070] bg-[#f0f0f0]" />
                Automatic (Recommended)
              </label>
              <div className="flex h-[18px] items-center">
                <label className="flex items-center gap-[4px]">
                  <input type="radio" name="gamma" className="h-[12px] w-[12px] appearance-none rounded-full bg-[#6a6a6a]" />
                  Override
                </label>
                <div className="mr-[18px] ml-auto grid h-[14px] w-[67px] items-center bg-[#626262]">
                  <input aria-label="Gamma value" defaultValue="1.0" className="w-full bg-transparent pl-[3px] text-[#8c8c8c] outline-none [grid-area:1/1]" />
                  <svg viewBox="0 0 6 10" className="mr-[2px] h-[9px] w-[5px] justify-self-end [grid-area:1/1]" fill="#999"><path d="M.5 4L3 .5 5.500 4zM.5 6L3 9.500 5.500 6z" /></svg>
                </div>
              </div>
            </fieldset>
            <div className="mt-[5px] flex h-[30px] items-center justify-between border border-[#3a3a3a] pr-[22px] pl-[12px]">
              <label className="flex items-center gap-[4px] text-[#8a8a8a]">
                <input type="checkbox" disabled className="h-[11px] w-[11px] appearance-none bg-[#5a5a5a]" />Sequence
              </label>
              <label className="flex items-center gap-[4px]">
                <span className="grid">
                  <input type="checkbox" defaultChecked className="h-[11px] w-[11px] appearance-none bg-[#6a6a6a] [grid-area:1/1]" />
                  <svg viewBox="0 0 11 11" className="pointer-events-none h-[11px] w-[11px] [grid-area:1/1]" fill="none" stroke="#fff" strokeWidth="1.600"><path d="M2.500 5.500l2 2.500 4-6" /></svg>
                </span>
                Preview
              </label>
            </div>
          </div>
          <div className="ml-[10px] flex h-[103px] w-[147px] items-center justify-center border border-[#b4b4b4]">IMAGE</div>
        </div>
        <dl className="mt-[8px] grid grid-cols-[64px_1fr] leading-[16px]">
          <dt>Statistics:</dt><dd>N/A</dd>
          <dt>Location:</dt><dd>N/A</dd>
        </dl>
      </div>
      <svg viewBox="0 0 8 8" className="absolute right-px bottom-px h-[8px] w-[8px]" fill="#1c1c1c"><path d="M6 0h1v1H6zM4 2h1v1H4zM6 2h1v1H6zM2 4h1v1H2zM4 4h1v1H4zM6 4h1v1H6zM0 6h1v1H0zM2 6h1v1H2zM4 6h1v1H4z" /></svg>
    </section>
  );
}

/* ---------- JPEG dialog ---------- */

function Slider({ left, title, value, right, amount, className = "" }: { left: string; title: string; value?: string; right: string; amount: number; className?: string }) {
  return (
    <div className={`flex flex-col ${className}`}>
      <div className="grid h-[14px] grid-cols-[40px_1fr_40px] items-center pr-[8px] pl-[6px] text-center">
        <span>{left}</span>
        <span className="flex justify-center gap-[10px] pl-[6px]"><span>{title}</span>{value && <span>{value}</span>}</span>
        <span>{right}</span>
      </div>
      <input
        type="range"
        aria-label={title}
        defaultValue={amount}
        className="mt-[4px] mr-[24px] ml-[23px] h-[18px] appearance-none bg-transparent [&::-webkit-slider-runnable-track]:h-[4px] [&::-webkit-slider-runnable-track]:bg-[#eeeeee] [&::-webkit-slider-thumb]:-mt-[6px] [&::-webkit-slider-thumb]:h-[17px] [&::-webkit-slider-thumb]:w-[10px] [&::-webkit-slider-thumb]:appearance-none [&::-webkit-slider-thumb]:bg-[#0078d7] [&::-webkit-slider-thumb]:[clip-path:polygon(0_0,100%_0,100%_70%,50%_100%,0_70%)]"
      />
      <div className="mr-[28px] ml-[28px] mt-[1px] flex justify-between">
        {Array.from({ length: 21 }, (_, i) => <span key={i} className="h-[3px] w-px bg-[#aaaaaa]" />)}
      </div>
    </div>
  );
}

function JpegDialog() {
  return (
    <section className="absolute top-[217px] left-[311px] flex h-[264px] w-[300px] flex-col rounded-[8px] bg-[#444] text-[10px] text-[#e2e2e2] shadow-[0_8px_34px_rgba(0,0,0,0.4),0_0_2px_rgba(0,0,0,0.5)]">
      <div className="flex h-[28px] shrink-0 items-center justify-between rounded-t-[8px] bg-white pl-[7px]">
        <div className="flex items-center gap-[4px]">
          <AppIcon />
          <h2 className="text-[11px] text-[#222]">JPEG Image Control</h2>
        </div>
        <CloseX className="text-[#222]" />
      </div>
      <fieldset className="mt-[11px] mr-[11px] ml-[7px] flex h-[184px] flex-col rounded-[2px] border border-[#383838]">
        <legend className="ml-[5px] px-[3px] leading-[8px]">Image Control</legend>
        <div className="mt-[14px] flex flex-col gap-[10px]">
          <Slider left="Worse" title="Quality:" value="95" right="Best" amount={95} />
          <Slider left="Large" title="File Size" right="Small" amount={5} />
          <Slider left="Normal" title="Smoothing:" value="0" right="Max" amount={0} className="mt-[3px]" />
        </div>
      </fieldset>
      <div className="mt-[11px] flex gap-[34px] pl-[56px]">
        <Btn className="h-[20px] w-[73px] border border-dashed border-[#999]">OK</Btn>
        <Btn className="h-[20px] w-[73px]">Cancel</Btn>
      </div>
    </section>
  );
}

export default function App() {
  return (
    <div className="relative flex min-h-screen flex-col overflow-hidden bg-[#444] font-[Roboto,sans-serif]">
      <div className="bg-white"><MenuBar /></div>
      <MainToolbar />
      <main className="flex min-h-[577px] flex-1">
        <LeftToolbar />
        <div className="flex min-w-0 flex-1 flex-col">
          <div className="flex h-[37px] shrink-0 flex-col bg-[#525252] pl-[2px] text-[11px] text-[#d8d8d8]">
            <div className="h-[19px] pl-[9px]"><div className="h-[17px] w-[80px] bg-gradient-to-b from-[#777] to-[#5a5a5a] pl-[20px] leading-[17px]">M</div></div>
            <div className="h-[18px] bg-gradient-to-b from-[#494949] to-[#3a3a3a] pl-[12px] leading-[17px]">Polyg</div>
          </div>
          <div className="flex min-h-0 flex-1">
            <SceneExplorer />
            <div className="flex min-w-0 flex-1 pt-[5px]"><Viewport /></div>
            <CommandPanel />
          </div>
        </div>
      </main>
      <Timeline />
      <StatusBar />
      <div className="h-[4px] shrink-0 bg-gradient-to-r from-[#1b2033] via-[#131e6b] to-[#1d2740]" />
      <FrameWindow />
      <SaveDialog />
      <JpegDialog />
      <div className="pointer-events-none absolute top-[208px] left-[293px] h-[281px] w-[328px] border-[3px] border-[#f40b0b]" />
    </div>
  );
}
